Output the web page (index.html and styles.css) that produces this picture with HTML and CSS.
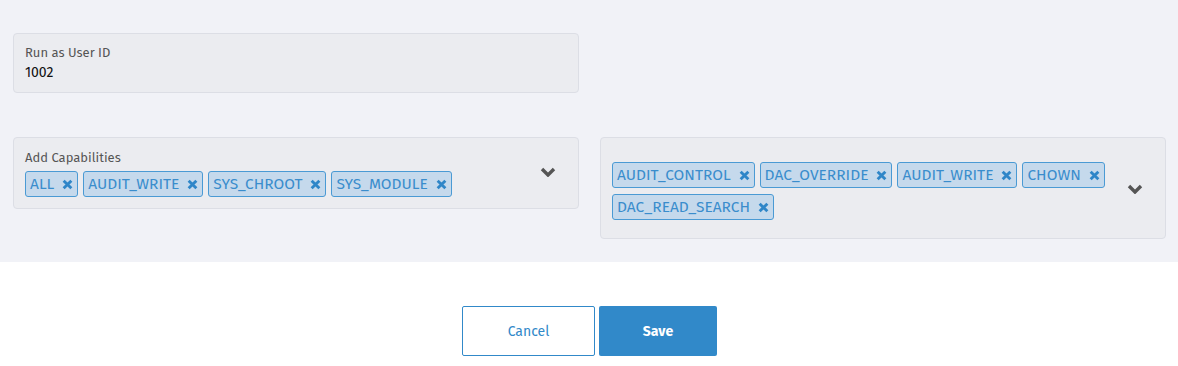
FILE: index.html
```html
<!DOCTYPE html>
<html lang="en">
<head>
  <meta charset="UTF-8" />
  <title>Security Context</title>
  <link rel="stylesheet" href="styles.css">
</head>
<body>

<div class="section">
  <div class="row">
    <div class="field">
      <label>Run as User ID</label>
      <div class="value">1002</div>
    </div>
  </div>

  <div class="row caps">
    <div class="field select">
      <div class="select-body">
        <label>Add Capabilities</label>
        <div class="tags">
          <span class="tag">ALL <svg class="x" viewBox="0 0 10 10"><path d="M1.5 1.5 L8.5 8.5 M8.5 1.5 L1.5 8.5"/></svg></span>
          <span class="tag">AUDIT_WRITE <svg class="x" viewBox="0 0 10 10"><path d="M1.5 1.5 L8.5 8.5 M8.5 1.5 L1.5 8.5"/></svg></span>
          <span class="tag">SYS_CHROOT <svg class="x" viewBox="0 0 10 10"><path d="M1.5 1.5 L8.5 8.5 M8.5 1.5 L1.5 8.5"/></svg></span>
          <span class="tag">SYS_MODULE <svg class="x" viewBox="0 0 10 10"><path d="M1.5 1.5 L8.5 8.5 M8.5 1.5 L1.5 8.5"/></svg></span>
        </div>
      </div>
      <svg class="chevron" width="16" height="10" viewBox="0 0 16 10"><path d="M2 2 L8 8 L14 2"/></svg>
    </div>

    <div class="field select drop">
      <div class="select-body">
        <div class="tags">
          <span class="tag">AUDIT_CONTROL <svg class="x" viewBox="0 0 10 10"><path d="M1.5 1.5 L8.5 8.5 M8.5 1.5 L1.5 8.5"/></svg></span>
          <span class="tag">DAC_OVERRIDE <svg class="x" viewBox="0 0 10 10"><path d="M1.5 1.5 L8.5 8.5 M8.5 1.5 L1.5 8.5"/></svg></span>
          <span class="tag">AUDIT_WRITE <svg class="x" viewBox="0 0 10 10"><path d="M1.5 1.5 L8.5 8.5 M8.5 1.5 L1.5 8.5"/></svg></span>
          <span class="tag">CHOWN <svg class="x" viewBox="0 0 10 10"><path d="M1.5 1.5 L8.5 8.5 M8.5 1.5 L1.5 8.5"/></svg></span>
          <span class="tag">DAC_READ_SEARCH <svg class="x" viewBox="0 0 10 10"><path d="M1.5 1.5 L8.5 8.5 M8.5 1.5 L1.5 8.5"/></svg></span>
        </div>
      </div>
      <svg class="chevron" width="16" height="10" viewBox="0 0 16 10"><path d="M2 2 L8 8 L14 2"/></svg>
    </div>
  </div>
</div>

<div class="footer">
  <button class="btn cancel">Cancel</button>
  <button class="btn save">Save</button>
</div>

</body>
</html>
```

FILE: styles.css
```css
:root {
  --bg-section: #f1f2f7;
  --field-bg: #ebecf0;
  --field-border: #dcdee5;
  --primary: #3189c9;
  --tag-bg: #c5d9ec;
  --tag-text: #3a8dcc;
  --font: 'Fira Sans', Roboto, 'Liberation Sans', sans-serif;
}

* {
  box-sizing: border-box;
  margin: 0;
  padding: 0;
  font-family: var(--font);
}

body {
  background: #fff;
  width: 1178px;
  height: 366px;
  overflow: hidden;
}

.section {
  background: var(--bg-section);
  height: 262px;
  padding: 33px 13px 0;
}

.row {
  display: grid;
  grid-template-columns: 566px 566px;
  column-gap: 21px;
  align-items: start;
}

.caps {
  margin-top: 44px;
}

.field {
  background: var(--field-bg);
  border: 1px solid var(--field-border);
  border-radius: 4px;
  padding: 11px 11px 10px;
  height: 60px;
}

.field label {
  display: block;
  font-size: 13px;
  color: #555;
  line-height: 16px;
}

.value {
  font-size: 14px;
  color: #111;
  margin-top: 3px;
}

.select {
  display: flex;
  align-items: center;
  height: auto;
  padding: 12px 22px 11px 11px;
}

.select .chevron {
  margin-top: -3px;
}

.drop {
  padding-top: 24px;
  padding-bottom: 18px;
}

.drop .chevron {
  margin-top: -4px;
}

.chevron path {
  fill: none;
  stroke: #555;
  stroke-width: 3.4;
}

.select-body {
  flex: 1;
}

.tags {
  display: flex;
  flex-wrap: wrap;
  gap: 6px 5px;
  margin-top: 5px;
  width: 500px;
}

.drop .tags {
  margin-top: 0;
}

.tag {
  display: inline-flex;
  align-items: center;
  gap: 8px;
  height: 26px;
  padding: 0 4px;
  background: var(--tag-bg);
  border: 1px solid #4a9ad4;
  border-radius: 3px;
  color: var(--tag-text);
  font-size: 15.5px;
}

.tag .x {
  width: 11px;
  height: 11px;
}

.x path {
  fill: none;
  stroke: #2f86c8;
  stroke-width: 2.6;
}

.footer {
  display: flex;
  justify-content: center;
  gap: 4px;
  padding-top: 44px;
  padding-left: 1px;
}

.btn {
  height: 50px;
  font-size: 14px;
  border-radius: 2px;
  cursor: pointer;
}

.cancel {
  width: 133px;
  background: #fff;
  border: 1px solid var(--primary);
  color: var(--primary);
}

.save {
  width: 118px;
  background: var(--primary);
  border: none;
  color: #fff;
  font-weight: bold;
}
```
